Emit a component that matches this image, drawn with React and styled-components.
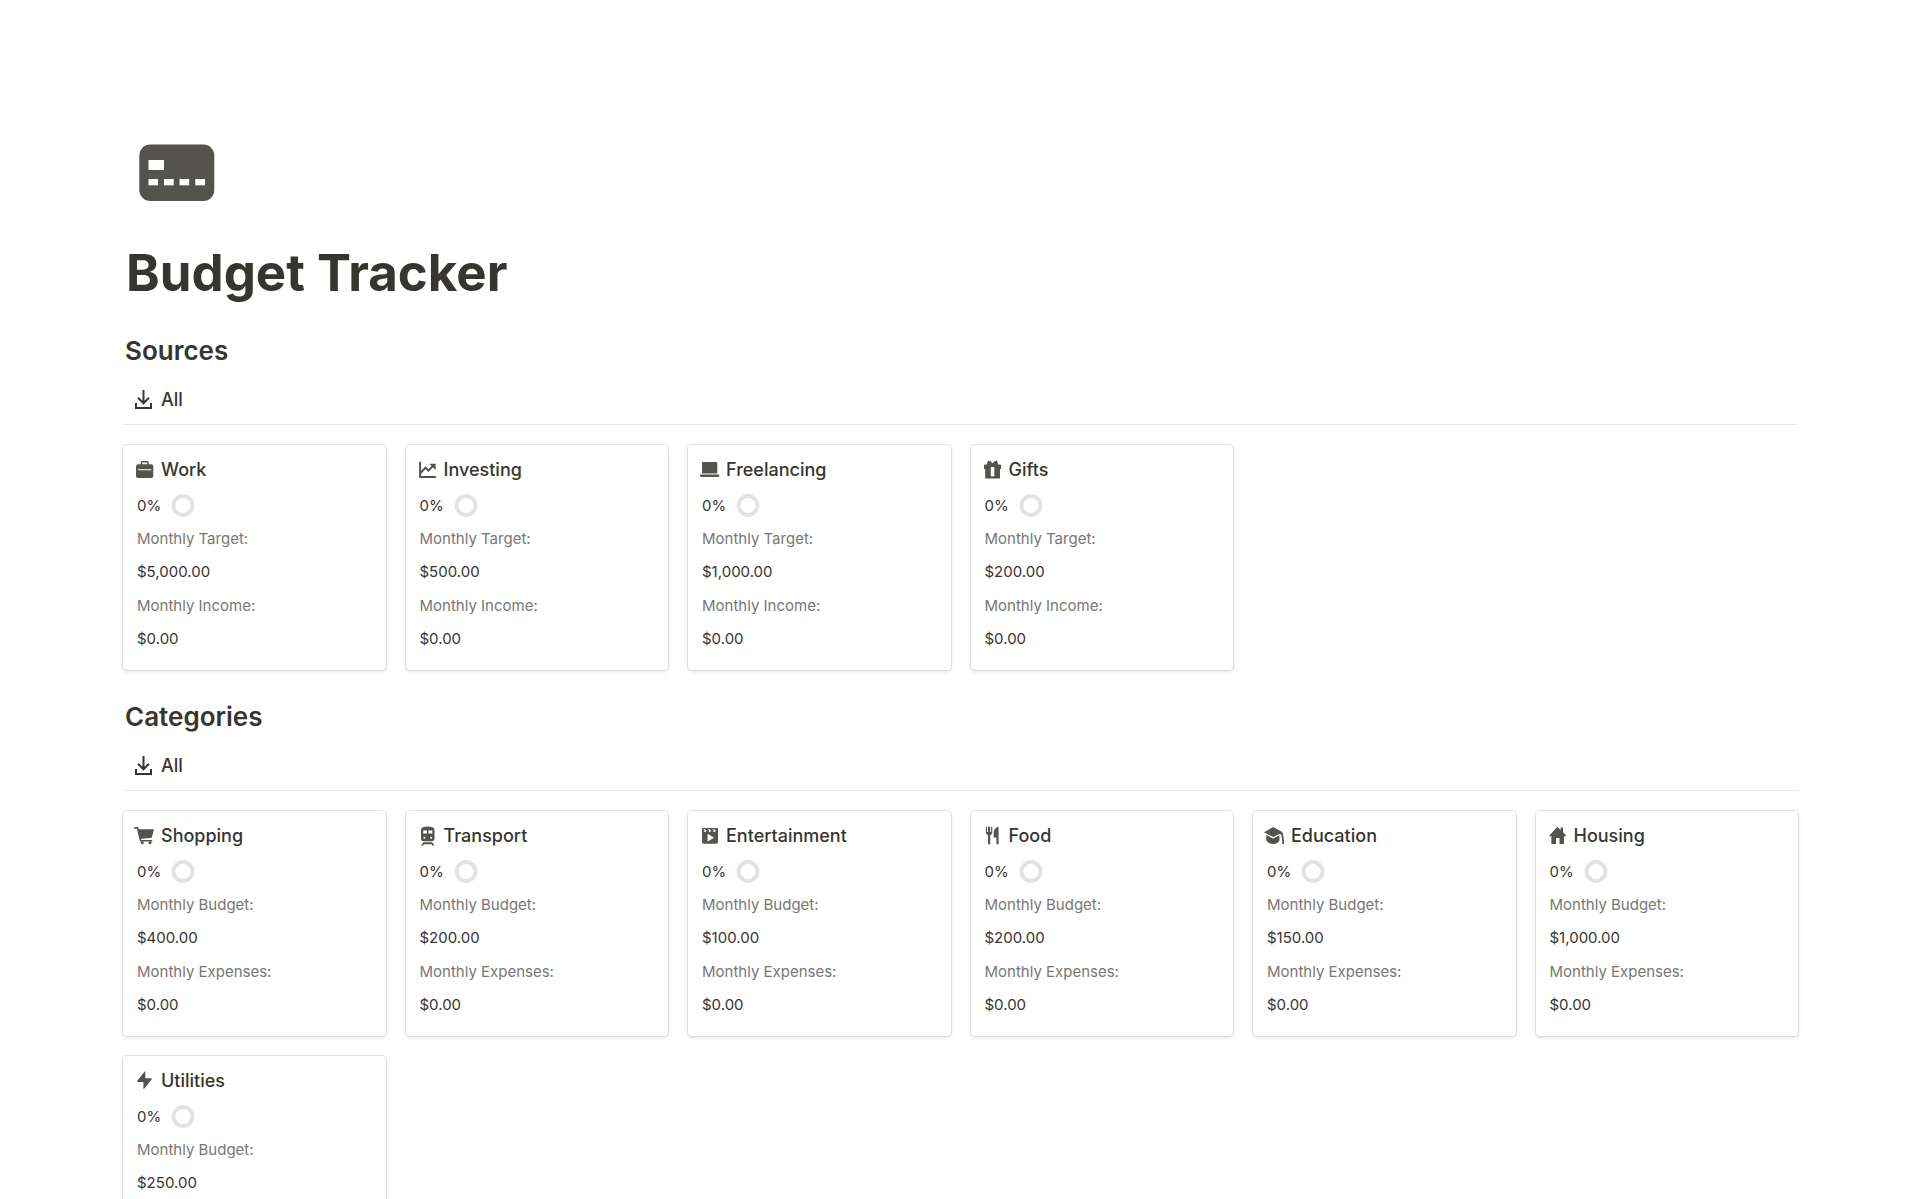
import styled, { createGlobalStyle } from "styled-components";

const GlobalStyle = createGlobalStyle`
  * {
    box-sizing: border-box;
  }
  body {
    margin: 0;
    background: #ffffff;
    color: #37352f;
    font-family: Inter, "Liberation Sans", sans-serif;
  }
`;

const Page = styled.main`
  padding: 122px 122px 60px 123px;
`;

const PageHeader = styled.header`
  padding-left: 3px;
`;

const PageIcon = styled.svg`
  display: block;
  width: 101px;
  height: 101px;
  margin-bottom: 18px;
`;

const Title = styled.h1`
  margin: 0;
  font-size: 51px;
  font-weight: 700;
  line-height: 63px;
`;

const SectionLayout = styled.section`
  padding-top: 29px;
`;

const SectionTitle = styled.h2`
  margin: 0 0 13px;
  padding-left: 2px;
  font-size: 26px;
  font-weight: 600;
  line-height: 36px;
`;

const Tabs = styled.div`
  display: flex;
  padding-bottom: 7px;
  border-bottom: 1px solid #e9e9e7;
`;

const TabButton = styled.button`
  display: flex;
  align-items: center;
  gap: 6px;
  height: 35px;
  padding: 0 11px;
  border: none;
  border-radius: 4px;
  background: transparent;
  color: inherit;
  font-family: inherit;
  font-size: 18px;
  font-weight: 500;
  line-height: 24px;
  cursor: pointer;
`;

const CardGrid = styled.div`
  display: grid;
  grid-template-columns: repeat(auto-fill, minmax(250px, 1fr));
  gap: 20px;
  padding-top: 20px;
`;

const CardLink = styled.a`
  display: block;
  padding: 11px 11px 15px;
  border-radius: 4px;
  background: #ffffff;
  box-shadow: 0 0 0 1px rgba(15, 15, 15, 0.1), 0 2px 4px rgba(15, 15, 15, 0.1);
  color: inherit;
  text-decoration: none;
`;

const CardTitle = styled.div`
  display: flex;
  align-items: center;
  gap: 6px;
  height: 27px;
  margin-bottom: 6px;
  font-size: 18px;
  font-weight: 500;
`;

const IconBox = styled.svg`
  flex: none;
  display: block;
  width: 21px;
  height: 21px;
  color: ${({ $dark }) => ($dark ? "#37352f" : "#55534e")};
`;

const Progress = styled.div`
  display: flex;
  align-items: center;
  gap: 10px;
  height: 32px;
  padding-left: 3px;
  font-size: 15px;
`;

const Ring = styled.svg`
  display: block;
  width: 24px;
  height: 24px;
`;

const Property = styled.div`
  margin-top: 1px;
  padding-left: 3px;
  font-size: 15px;
  line-height: 33px;
`;

const PropertyLabel = styled.div`
  color: #787774;
`;

const icons = {
  download: (
    <g fill="none" stroke="currentColor" strokeWidth="2">
      <path d="M9.5 1v13.4M4 8.8l5.5 5.5L15 8.8" />
      <path d="M2 14v5h15v-5" />
    </g>
  ),
  work: (
    <>
      <path
        d="M7.4 6V3.6Q7.4 2.7 8.3 2.7h4.7Q13.9 2.7 13.9 3.6V6"
        fill="none"
        stroke="currentColor"
        strokeWidth="1.5"
      />
      <path d="M4.3 5.3H17Q19.3 5.3 19.3 7.6V10.2H2V7.6Q2 5.3 4.3 5.3Z" />
      <path d="M2 9.8H4V11.3H17.3V9.8H19.3V17Q19.3 19 17.3 19H4Q2 19 2 17Z" />
    </>
  ),
  investing: (
    <>
      <path
        d="M3.1 2.8V18H18.8M3.6 14L8.4 8.6L11.4 11.5L16.6 6.4"
        fill="none"
        stroke="currentColor"
        strokeWidth="2"
      />
      <path d="M12.3 4.8H18.6V11.1Z" />
    </>
  ),
  freelancing: (
    <>
      <path d="M4 3.1H17.3Q18.3 3.1 18.3 4.1V14.5H3V4.1Q3 3.1 4 3.1Z" />
      <path d="M1 15.5H20.3V16.4Q20.3 18 18.7 18H2.6Q1 18 1 16.4Z" />
    </>
  ),
  gifts: (
    <path
      fillRule="evenodd"
      d="M6 1.4L8.5 2.3L10.5 4.2L12.5 2.3L15 1.4L16.2 5.4H18.2Q19.1 5.4 19.1 6.3V10H18V19.6H3.2V10H2V6.3Q2 5.4 2.9 5.4H5ZM8.8 8V17.3H12.3V8Z"
    />
  ),
  shopping: (
    <>
      <path
        d="M0.2 2.9H3.5L6.6 15.8H18.2"
        fill="none"
        stroke="currentColor"
        strokeWidth="1.6"
      />
      <path d="M4 4.2H20L17.7 12.7L6 14Z" />
      <circle cx="8.3" cy="17.8" r="1.5" />
      <circle cx="16" cy="17.8" r="1.5" />
    </>
  ),
  transport: (
    <>
      <path
        fillRule="evenodd"
        d="M4 5Q4 3 6 2.3Q10.7 0.6 15.5 2.3Q17.5 3 17.5 5V13.5Q17.5 16.2 14.8 16.2H6.7Q4 16.2 4 13.5ZM6.2 5.5V8.6H10V5.5ZM11.5 5.5V8.6H15.3V5.5ZM7.4 11.7A1 1 0 1 0 7.4 13.7A1 1 0 1 0 7.4 11.7ZM14.1 11.7A1 1 0 1 0 14.1 13.7A1 1 0 1 0 14.1 11.7Z"
      />
      <path d="M6.4 17.3H15.1L17.6 20.6H15.4L14.6 19.3H6.9L6.1 20.6H3.9Z" />
    </>
  ),
  entertainment: (
    <path
      fillRule="evenodd"
      d="M3 3H19V16.7Q19 18.7 17 18.7H5Q3 18.7 3 16.7ZM4 4.3L5.8 5.7L4.6 7.1H6.3L7.6 5.7L6 4.3ZM8.7 4.3L10.4 5.7L9.3 7.1H11L12.2 5.7L10.6 4.3ZM13.3 4.3L15 5.7L13.9 7.1H15.6L16.9 5.7L15.2 4.3ZM8.6 8.8V16.5L15 12.7Z"
    />
  ),
  food: (
    <path d="M3.9 1.8H5V7H6V1.8H8.1V7H9.1V1.8H10.3V7.2Q10.3 9.7 8.2 10.4V19.3H6V10.4Q3.9 9.7 3.9 7.2ZM16.6 1.8V19.3H14.4V12.5H11.6V8Q12 2.8 16.6 1.8Z" />
  ),
  education: (
    <>
      <path d="M9.2 2L18.7 7.2L9.2 12L0 7.3Z" />
      <path d="M2.3 10L9.2 13.6L15.4 10.3V15.6Q13.8 19 9.2 19Q4.3 19 2.3 15.6Z" />
      <path
        d="M11 6.6L17.8 8.6Q19 12 19.2 19"
        fill="none"
        stroke="currentColor"
        strokeWidth="1.8"
      />
    </>
  ),
  housing: (
    <path d="M10.3 1.7L13.7 5V2.5H16V7.3L18.9 10.3V11.3H17V19H12.5V13H9V19H4.4V11.3H2.6V10.3Z" />
  ),
  utilities: (
    <path
      d="M11.3 1.6V8.3H17.2Q18.3 8.5 17.6 9.5L10.2 18.7Q9.4 19.3 9.4 18.3V12H3.7Q2.7 11.8 3.3 10.8L10.4 1.8Q11.2 1 11.3 1.6Z"
    />
  ),
};

function Icon({ name, dark }) {
  return (
    <IconBox viewBox="0 0 21 21" fill="currentColor" $dark={dark} aria-hidden="true">
      {icons[name]}
    </IconBox>
  );
}

function CreditCard() {
  return (
    <PageIcon viewBox="0 0 101 101" aria-hidden="true">
      <rect x="13.3" y="22.5" width="75" height="56.5" rx="11" fill="#55534e" />
      <g fill="#ffffff">
        <rect x="22.5" y="38" width="15.5" height="10" />
        <rect x="22.5" y="57" width="9.5" height="6.3" />
        <rect x="38" y="57" width="9.7" height="6.3" />
        <rect x="53.5" y="57" width="9.7" height="6.3" />
        <rect x="69.3" y="57" width="9.7" height="6.3" />
      </g>
    </PageIcon>
  );
}

function Card({ item, goalLabel, totalLabel }) {
  return (
    <CardLink href={`#${item.icon}`}>
      <CardTitle>
        <Icon name={item.icon} />
        {item.name}
      </CardTitle>
      <Progress>
        0%
        <Ring viewBox="0 0 24 24" aria-hidden="true">
          <circle cx="12" cy="12.5" r="9.5" fill="none" stroke="#e3e2e0" strokeWidth="3.8" />
        </Ring>
      </Progress>
      <Property>
        <PropertyLabel>{goalLabel}</PropertyLabel>
        <div>{item.goal}</div>
      </Property>
      <Property>
        <PropertyLabel>{totalLabel}</PropertyLabel>
        <div>$0.00</div>
      </Property>
    </CardLink>
  );
}

function Section({ title, items, goalLabel, totalLabel }) {
  return (
    <SectionLayout>
      <SectionTitle>{title}</SectionTitle>
      <Tabs>
        <TabButton type="button">
          <Icon name="download" dark />
          All
        </TabButton>
      </Tabs>
      <CardGrid>
        {items.map((item) => (
          <Card key={item.icon} item={item} goalLabel={goalLabel} totalLabel={totalLabel} />
        ))}
      </CardGrid>
    </SectionLayout>
  );
}

const sources = [
  { icon: "work", name: "Work", goal: "$5,000.00" },
  { icon: "investing", name: "Investing", goal: "$500.00" },
  { icon: "freelancing", name: "Freelancing", goal: "$1,000.00" },
  { icon: "gifts", name: "Gifts", goal: "$200.00" },
];

const categories = [
  { icon: "shopping", name: "Shopping", goal: "$400.00" },
  { icon: "transport", name: "Transport", goal: "$200.00" },
  { icon: "entertainment", name: "Entertainment", goal: "$100.00" },
  { icon: "food", name: "Food", goal: "$200.00" },
  { icon: "education", name: "Education", goal: "$150.00" },
  { icon: "housing", name: "Housing", goal: "$1,000.00" },
  { icon: "utilities", name: "Utilities", goal: "$250.00" },
];

function App() {
  return (
    <Page>
      <GlobalStyle />
      <PageHeader>
        <CreditCard />
        <Title>Budget Tracker</Title>
      </PageHeader>
      <Section
        title="Sources"
        items={sources}
        goalLabel="Monthly Target:"
        totalLabel="Monthly Income:"
      />
      <Section
        title="Categories"
        items={categories}
        goalLabel="Monthly Budget:"
        totalLabel="Monthly Expenses:"
      />
    </Page>
  );
}

export default App;
